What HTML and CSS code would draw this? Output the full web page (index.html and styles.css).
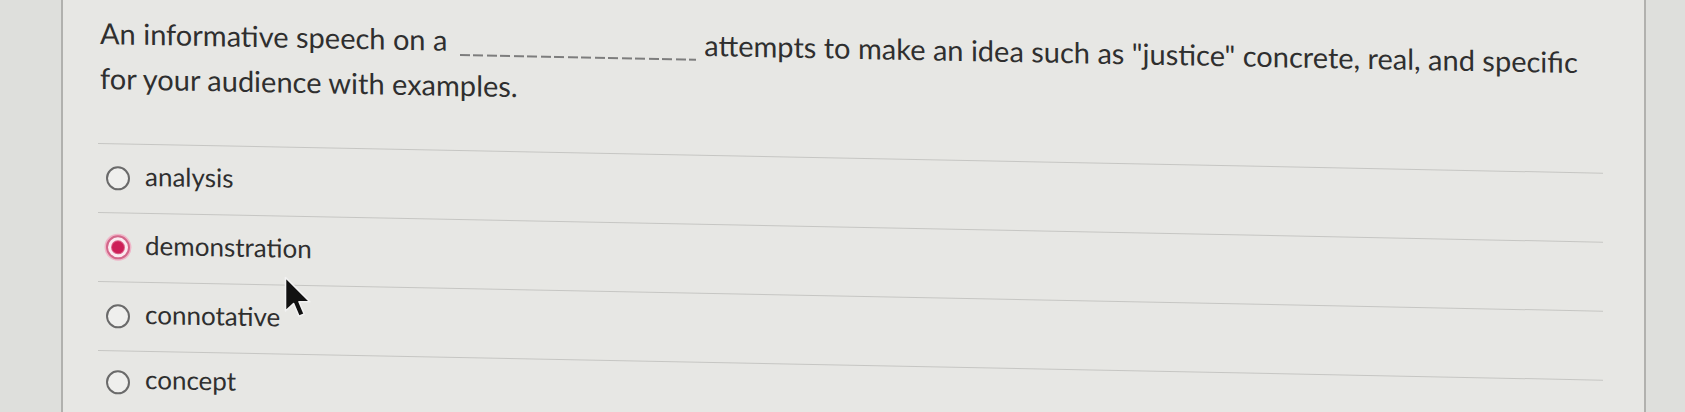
FILE: index.html
```html
<!DOCTYPE html>
<html lang="en">
<head>
<meta charset="utf-8">
<title>Quiz question</title>
<link rel="stylesheet" href="styles.css">
</head>
<body>
<div class="screen">
  <div class="panel">
    <div class="content">
      <p class="question">An informative speech on a <span class="blank"></span> attempts to make an idea such as "justice" concrete, real, and specific<br>for your audience with examples.</p>
      <div class="answers">
        <label class="answer"><span class="radio"></span><span class="answer-text">analysis</span></label>
        <label class="answer"><span class="radio checked"></span><span class="answer-text">demonstration</span></label>
        <label class="answer"><span class="radio"></span><span class="answer-text">connotative</span></label>
        <label class="answer last"><span class="radio"></span><span class="answer-text">concept</span></label>
      </div>
    </div>
    <svg class="cursor" width="28" height="42" viewBox="0 0 28 42" aria-hidden="true">
      <path d="M1.5 1.5 L1.5 35 L9.6 27.6 L15 40.2 L20.2 38 L15 25.8 L25.8 25.8 Z" fill="#111" stroke="#f2f2f2" stroke-width="1.6" stroke-linejoin="round"/>
    </svg>
  </div>
</div>
</body>
</html>
```

FILE: styles.css
```css
* { box-sizing: border-box; }

html, body {
  margin: 0;
  padding: 0;
}

body {
  width: 1685px;
  height: 412px;
  overflow: hidden;
  background: #dedfdc;
  font-family: Lato, "Open Sans", "Liberation Sans", sans-serif;
  color: #2f2f2f;
}

.screen {
  height: 412px;
  padding-left: 61px;
  padding-right: 39px;
}

.panel {
  position: relative;
  height: 412px;
  overflow: hidden;
  background: #e7e7e4;
  border-left: 2px solid #b1b1ae;
  border-right: 2px solid #b1b1ae;
}

.content {
  width: 1560px;
  padding: 10px 0 0 35px;
  transform: skewY(1.13deg);
  transform-origin: 37px 43px;
}

.question {
  margin: 0;
  padding-left: 2px;
  font-size: 29px;
  line-height: 45px;
  white-space: nowrap;
}

.blank {
  display: inline-block;
  width: 236px;
  height: 2px;
  margin: 0 1px 0 5px;
  vertical-align: -5px;
  background: repeating-linear-gradient(to right, #7d7d7d 0 10px, transparent 10px 13.5px);
}

.answers {
  margin-top: 43px;
  width: 1505px;
}

.answer {
  display: flex;
  align-items: center;
  height: 69px;
  border-top: 1px solid #c6c6c3;
}

.answer.last {
  height: 62px;
}

.radio {
  position: relative;
  flex: none;
  width: 24px;
  height: 24px;
  margin-left: 8px;
  border: 2px solid #6a6a6a;
  border-radius: 50%;
  background: #efefed;
}

.radio.checked {
  border-color: #d3678a;
  background: #fbeaf0;
  box-shadow: 0 0 0 1.5px #efb6c8;
}

.radio.checked::after {
  content: "";
  position: absolute;
  left: 4px;
  top: 4px;
  width: 12px;
  height: 12px;
  border-radius: 50%;
  background: #cd1f58;
  box-shadow: 0 0 0 1px #dc6189;
}

.answer-text {
  margin-left: 15px;
  padding-bottom: 7px;
  font-size: 26px;
  line-height: 26px;
}

.cursor {
  position: absolute;
  left: 221px;
  top: 276px;
}
```
